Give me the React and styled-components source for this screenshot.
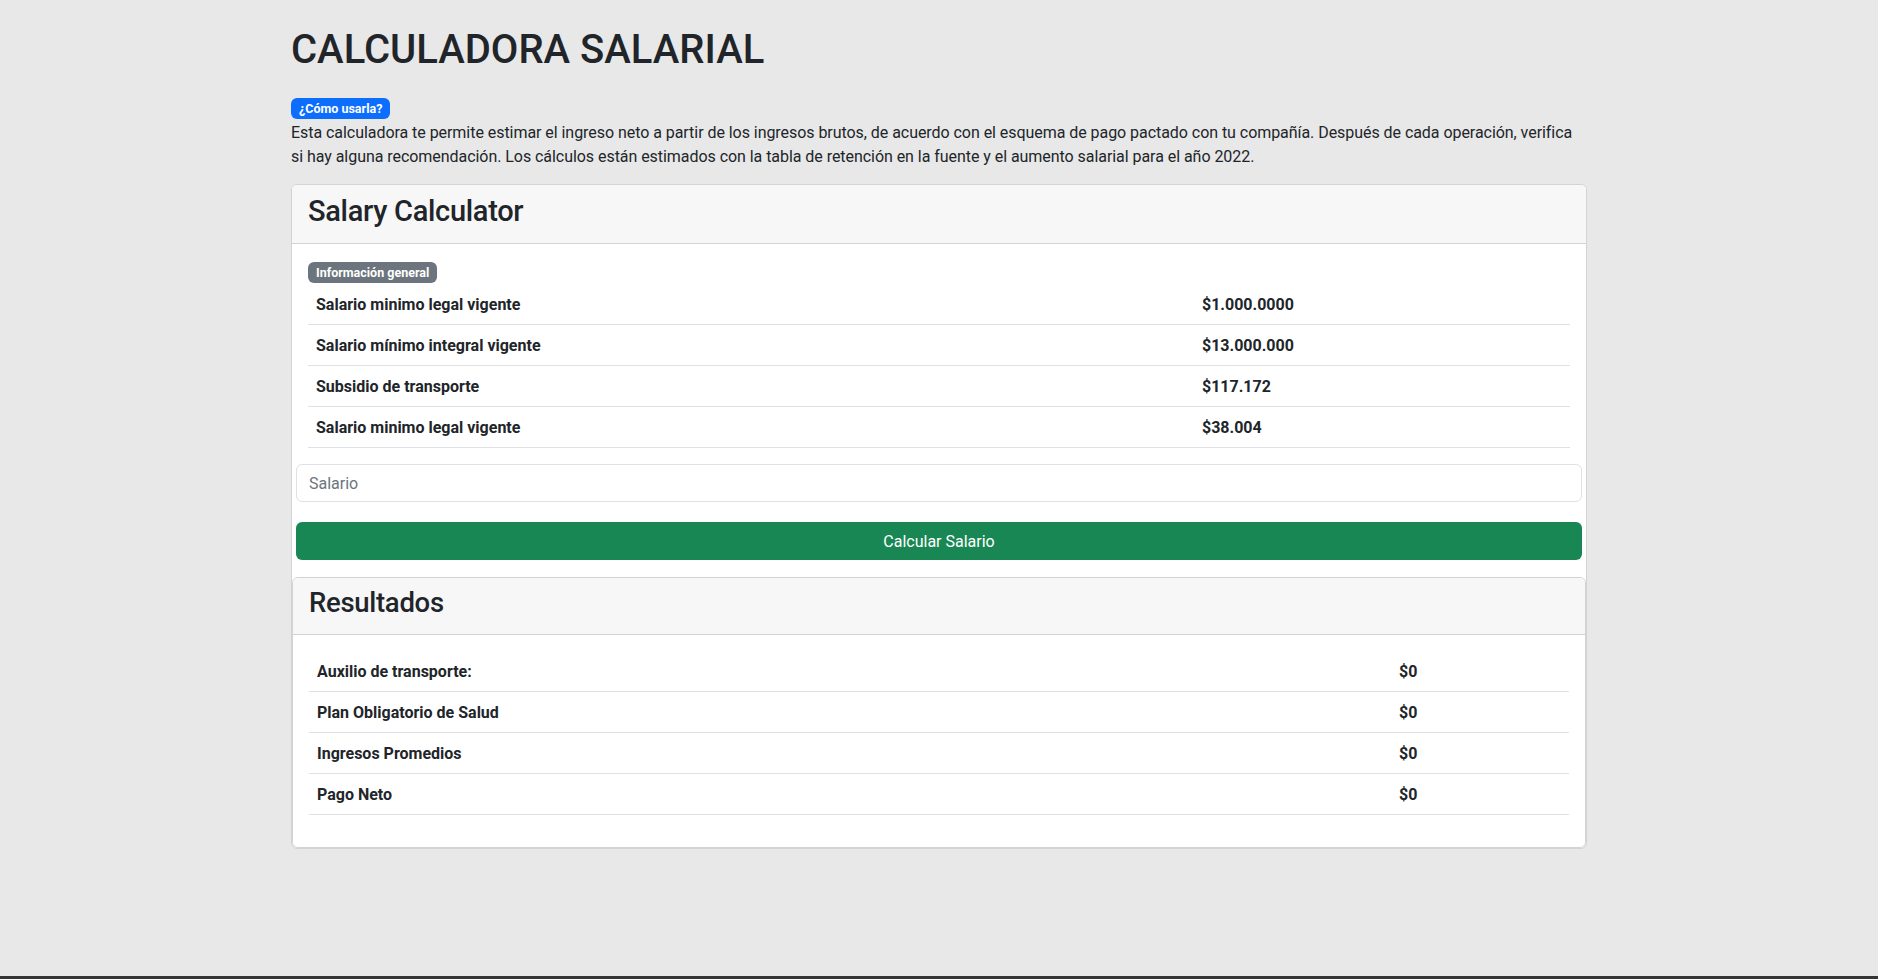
import React from "react";
import styled, { createGlobalStyle } from "styled-components";

const GlobalStyle = createGlobalStyle`
  *, *::before, *::after { box-sizing: border-box; }
  body {
    margin: 0;
    background: #e8e8e8;
    color: #212529;
    font-family: Roboto, "Liberation Sans", Arial, sans-serif;
    font-size: 16px;
    line-height: 24px;
  }
`;

const generalInfo = [
  ["Salario minimo legal vigente", "$1.000.0000"],
  ["Salario mínimo integral vigente", "$13.000.000"],
  ["Subsidio de transporte", "$117.172"],
  ["Salario minimo legal vigente", "$38.004"],
];

const results = [
  ["Auxilio de transporte:", "$0"],
  ["Plan Obligatorio de Salud", "$0"],
  ["Ingresos Promedios", "$0"],
  ["Pago Neto", "$0"],
];

const InfoTable = ({ rows, labelWidth }) => (
  <Table>
    <colgroup>
      <col style={{ width: labelWidth }} />
      <col />
    </colgroup>
    <tbody>
      {rows.map(([label, value], i) => (
        <tr key={i}>
          <Cell>{label}</Cell>
          <Cell>{value}</Cell>
        </tr>
      ))}
    </tbody>
  </Table>
);

const App = () => {
  return (
    <Page>
      <GlobalStyle />
      <Container>
        <Title>CALCULADORA SALARIAL</Title>
        <BadgeLine>
          <Badge $color="#0d6efd">¿Cómo usarla?</Badge>
        </BadgeLine>
        <Intro>
          Esta calculadora te permite estimar el ingreso neto a partir de los
          ingresos brutos, de acuerdo con el esquema de pago pactado con tu
          compañía. Después de cada operación, verifica si hay alguna
          recomendación. Los cálculos están estimados con la tabla de retención
          en la fuente y el aumento salarial para el año 2022.
        </Intro>

        <Card>
          <CardHeader>
            <HeaderTitle>Salary Calculator</HeaderTitle>
          </CardHeader>
          <CardBody>
            <BadgeLine>
              <Badge $color="#6c757d">Información general</Badge>
            </BadgeLine>
            <InfoTable rows={generalInfo} labelWidth="886px" />
          </CardBody>

          <Form onSubmit={(e) => e.preventDefault()}>
            <SalaryInput type="number" placeholder="Salario" />
            <SubmitButton type="submit">Calcular Salario</SubmitButton>
          </Form>

          <ResultsCard>
            <CardHeader $small>
              <HeaderTitle $small>Resultados</HeaderTitle>
            </CardHeader>
            <CardBody $results>
              <InfoTable rows={results} labelWidth="1082px" />
            </CardBody>
          </ResultsCard>
        </Card>
      </Container>
    </Page>
  );
};

const Page = styled.div`
  min-height: 100vh;
  border-bottom: 3px solid #353535;
`;

const Container = styled.div`
  width: 1296px;
  margin: 0 auto;
  padding-top: 26px;
`;

const Title = styled.h1`
  margin: 0 0 22px;
  font-size: 40px;
  font-weight: 500;
  line-height: 48px;
`;

const BadgeLine = styled.div`
  display: flex;
  align-items: center;
  height: 24px;
  padding-top: 1px;
`;

const Badge = styled.span`
  display: inline-block;
  padding: 4px 8px;
  border-radius: 6px;
  background: ${(p) => p.$color};
  color: #fff;
  font-size: 12.5px;
  font-weight: 700;
  line-height: 13px;
  white-space: nowrap;
`;

const Intro = styled.p`
  margin: 0 0 15px;
  padding-top: 1px;
  letter-spacing: -0.05px;
`;

const Card = styled.div`
  background: #fff;
  border: 1px solid #d3d3d3;
  border-radius: 6px;
  overflow: hidden;
`;

const CardHeader = styled.div`
  height: ${(p) => (p.$small ? "57px" : "59px")};
  padding: ${(p) => (p.$small ? "8px 16px 0" : "7px 16px 0")};
  background: #f7f7f7;
  border-bottom: 1px solid #d3d3d3;
`;

const HeaderTitle = styled.h2`
  margin: 0;
  font-size: ${(p) => (p.$small ? "27.5px" : "29px")};
  font-weight: 500;
  line-height: ${(p) => (p.$small ? "34px" : "38px")};
  letter-spacing: -0.3px;
`;

const CardBody = styled.div`
  padding: ${(p) => (p.$results ? "16px 16px 32px" : "16px 16px 0")};
`;

const Table = styled.table`
  width: 100%;
  border-collapse: collapse;
  table-layout: fixed;
`;

const Cell = styled.td`
  padding: 9px 8px 7px;
  border-bottom: 1px solid #dee2e6;
  font-weight: 700;
  line-height: 24px;
`;

const Form = styled.form`
  display: flex;
  flex-direction: column;
  gap: 20px;
  padding: 16px 4px 0;
`;

const SalaryInput = styled.input`
  height: 38px;
  padding: 6px 12px;
  border: 1px solid #dee2e6;
  border-radius: 6px;
  font-family: inherit;
  font-size: 16px;
  color: #212529;
  outline: none;
  -moz-appearance: textfield;

  &::placeholder {
    color: #6c757d;
  }
  &::-webkit-outer-spin-button,
  &::-webkit-inner-spin-button {
    -webkit-appearance: none;
    margin: 0;
  }
`;

const SubmitButton = styled.button`
  height: 38px;
  border: none;
  border-radius: 6px;
  background: #198754;
  color: #fff;
  font-family: inherit;
  font-size: 16px;
  cursor: pointer;
`;

const ResultsCard = styled.div`
  margin-top: 17px;
  border: 1px solid #d3d3d3;
  border-radius: 6px;
  overflow: hidden;
  box-shadow: 0 1px 2px rgba(0, 0, 0, 0.12);
`;

export default App;
